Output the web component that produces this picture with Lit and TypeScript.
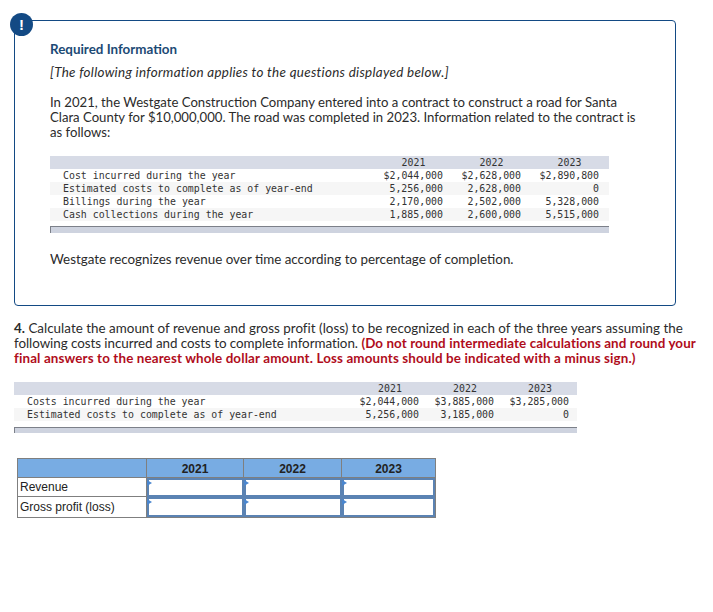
import { LitElement, html, css } from "lit";
import { customElement } from "lit/decorators.js";

type Row = [string, ...string[]];

const t1: Row[] = [
  ["Cost incurred during the year", "$2,044,000", "$2,628,000", "$2,890,800"],
  ["Estimated costs to complete as of year-end", "5,256,000", "2,628,000", "0"],
  ["Billings during the year", "2,170,000", "2,502,000", "5,328,000"],
  ["Cash collections during the year", "1,885,000", "2,600,000", "5,515,000"],
];
const t2: Row[] = [
  ["Costs incurred during the year", "$2,044,000", "$3,885,000", "$3,285,000"],
  ["Estimated costs to complete as of year-end", "5,256,000", "3,185,000", "0"],
];

@customElement("app-root")
export class AppRoot extends LitElement {
  static styles = css`
    :host { display: block; width: 713px; height: 612px; background: #fff; color: #2b2b2b;
      font-family: Lato, "Open Sans", sans-serif; font-size: 13.4px; overflow: hidden; }
    * { box-sizing: border-box; }
    .page { padding: 20px 0 0 14px; position: relative; }
    .badge { position: absolute; left: 10px; top: 13px; width: 23px; height: 23px; border-radius: 50%;
      background: #134a84; color: #fff; font: bold 15px/23px "Liberation Sans", sans-serif; text-align: center; }
    .box { width: 662px; height: 286px; border: 1px solid #134a84; border-radius: 4px; padding: 20px 35px 0 35px; }
    .req { font-weight: 700; color: #1c4a75; line-height: 16px; }
    .ital { font-style: italic; line-height: 16px; margin-top: 7px; letter-spacing: 0.3px; }
    .para { line-height: 15px; margin-top: 15px; width: 592px; font-size: 13.15px; }
    .stmt { margin-top: 16px; width: 559px; font: 9.9px/13px "DejaVu Sans Mono", monospace; color: #333; }
    .stmt2 { width: 563px; }
    .r { display: grid; height: 13px; white-space: nowrap; }
    .c1 { grid-template-columns: 1fr 78px 78px 78px; padding: 0 10px 0 13px; }
    .c2 { grid-template-columns: 1fr 75px 75px 75px; padding: 0 8px 0 13px; }
    .r span + span { text-align: right; }
    .r.h { background: #d7dbe6; }
    .r.h.c1 span + span { text-align: center; padding-left: 19px; }
    .r.h.c2 span + span { text-align: center; padding-left: 17px; }
    .r.alt { background: #f6f6f6; }
    .bar { height: 7px; margin-top: 5px; background: #ced3df; border-top: 1px solid #7c8089; border-left: 1px solid #7c8089; }
    .stmt2 .bar { height: 6px; margin-top: 6px; }
    .after { line-height: 16px; margin-top: 18px; }
    .q { margin-top: 15px; width: 690px; line-height: 15px; }
    .q b { font-weight: 700; }
    .l1 { letter-spacing: 0.02px; }
    .l2 { letter-spacing: -0.05px; }
    .red { color: #b00d1c; font-weight: 700; letter-spacing: 0.09px; }
    .l3 { letter-spacing: 0.13px; }
    .ans { margin: 25px 0 0 3px; width: 419px; display: grid; grid-template-columns: 129px 97px 98px 93px;
      grid-template-rows: 19px 19px 20px; border: 1px solid #7f7f7f; font: 12px "Liberation Sans", sans-serif; color: #222; }
    .ans div { display: flex; align-items: center; }
    .hd { background: #78ace3; border-right: 1px solid #7f7f7f; border-bottom: 1px solid #7f7f7f; justify-content: center; font-weight: 700; padding-top: 2px; }
    .hd:nth-child(4) { border-right: 0; }
    .lbl { padding-left: 2px; border-right: 1px solid #7f7f7f; border-bottom: 1px solid #7f7f7f; }
    .lbl.last { border-bottom: 0; }
    .inp { border: 2px solid #5b83b3; position: relative; }
    .inp::before { content: ""; position: absolute; left: -2px; top: 0; border-left: 5px solid #4a86cf;
      border-top: 3px solid transparent; border-bottom: 3px solid transparent; }
  `;

  private rows(data: Row[], cls: string) {
    return data.map((r, i) => html`<div class="r ${cls} ${i % 2 ? "alt" : ""}">${r.map((c) => html`<span>${c}</span>`)}</div>`);
  }

  private head(cls: string) {
    return html`<div class="r h ${cls}"><span></span><span>2021</span><span>2022</span><span>2023</span></div>`;
  }

  render() {
    return html`
      <div class="page">
        <div class="badge">!</div>
        <div class="box">
          <div class="req">Required Information</div>
          <div class="ital">[The following information applies to the questions displayed below.]</div>
          <div class="para">In 2021, the Westgate Construction Company entered into a contract to construct a road for Santa Clara County for $10,000,000. The road was completed in 2023. Information related to the contract is as follows:</div>
          <div class="stmt">
            ${this.head("c1")}
            ${this.rows(t1, "c1")}
            <div class="bar"></div>
          </div>
          <div class="after">Westgate recognizes revenue over time according to percentage of completion.</div>
        </div>
        <div class="q"><b>4.</b> <span class="l1">Calculate the amount of revenue and gross profit (loss) to be recognized in each of the three years assuming the</span> <span class="l2">following costs incurred and costs to complete information.</span> <span class="red">(Do not round intermediate calculations and round your <span class="l3">final answers to the nearest whole dollar amount. Loss amounts should be indicated with a minus sign.)</span></span></div>
        <div class="stmt stmt2">
          ${this.head("c2")}
          ${this.rows(t2, "c2")}
          <div class="bar"></div>
        </div>
        <div class="ans">
          <div class="hd"></div><div class="hd">2021</div><div class="hd">2022</div><div class="hd">2023</div>
          <div class="lbl">Revenue</div><div class="inp"></div><div class="inp"></div><div class="inp"></div>
          <div class="lbl last">Gross profit (loss)</div><div class="inp"></div><div class="inp"></div><div class="inp"></div>
        </div>
      </div>
    `;
  }
}
